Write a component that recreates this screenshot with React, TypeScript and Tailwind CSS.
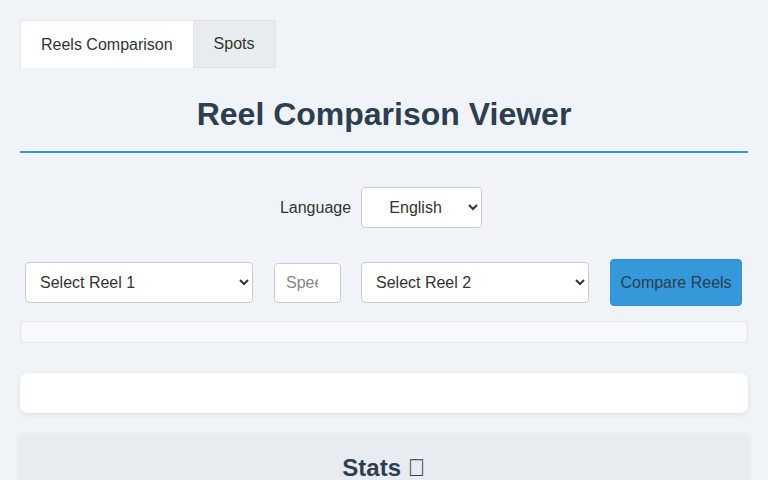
import { useState } from "react";

const TABS = ["Reels Comparison", "Spots"] as const;

export default function App() {
  const [tab, setTab] = useState<string>("Reels Comparison");

  return (
    <div className="min-h-screen bg-[#f0f4f8] px-[20px] pt-[20px] font-['Liberation_Sans',Arial,sans-serif] text-[#333]">
      {/* tabs */}
      <div className="flex">
        {TABS.map((t) => (
          <button
            key={t}
            onClick={() => setTab(t)}
            className={
              t === tab
                ? "h-[48px] px-[20px] text-[16px] bg-white border border-[#e3e7eb] border-b-0"
                : "h-[48px] px-[20px] text-[16px] bg-[#e9ecef] border border-[#dfe3e7] border-l-0"
            }
          >
            {t}
          </button>
        ))}
      </div>

      <h1 className="mt-[28px] pb-[18px] border-b-2 border-[#3498db] text-center text-[32px] font-bold text-[#2c3e50] leading-[37px]">
        Reel Comparison Viewer
      </h1>

      <div className="mt-[34px] flex items-center justify-center gap-[10px] pr-[6px]">
        <label className="text-[16px] text-[#333]">Language</label>
        <select className="h-[41px] w-[121px] rounded-[4px] border border-[#ccc] bg-white px-[8px] text-[16px] text-[#333] [text-align-last:center]">
          <option>English</option>
        </select>
      </div>

      <div className="mt-[31px] flex items-center gap-[21px] px-[5px]">
        <select className="h-[41px] w-[228px] rounded-[4px] border border-[#ccc] bg-white px-[10px] text-[16px] text-[#333]">
          <option>Select Reel 1</option>
        </select>
        <input
          placeholder="Speed"
          className="h-[40px] w-[67px] rounded-[4px] border border-[#ccc] bg-white pl-[11px] pr-[22px] text-[16px] placeholder:text-[#888]"
        />
        <select className="-ml-[1px] h-[41px] w-[228px] rounded-[4px] border border-[#ccc] bg-white px-[10px] text-[16px] text-[#333]">
          <option>Select Reel 2</option>
        </select>
        <button className="h-[47px] w-[132px] rounded-[4px] border border-[#2f8fd0] bg-[#3498db] text-[16px] text-[#2c3e50]">
          Compare Reels
        </button>
      </div>

      <div className="mt-[15px] h-[22px] rounded-[4px] border border-[#e2e6ea] bg-[#f7f9fb]" />

      <div className="mt-[30px] h-[40px] rounded-[8px] bg-white shadow-[0_2px_6px_rgba(0,0,0,0.08)]" />

      <div className="mx-[-2px] mt-[20px] rounded-[8px] bg-[#e8ecf0] pt-[17px] pb-[20px] shadow-[0_1px_4px_rgba(0,0,0,0.06)]">
        <h2 className="text-center text-[24px] font-bold text-[#2c3e50]">Stats {"\uF080"}</h2>
      </div>
    </div>
  );
}
